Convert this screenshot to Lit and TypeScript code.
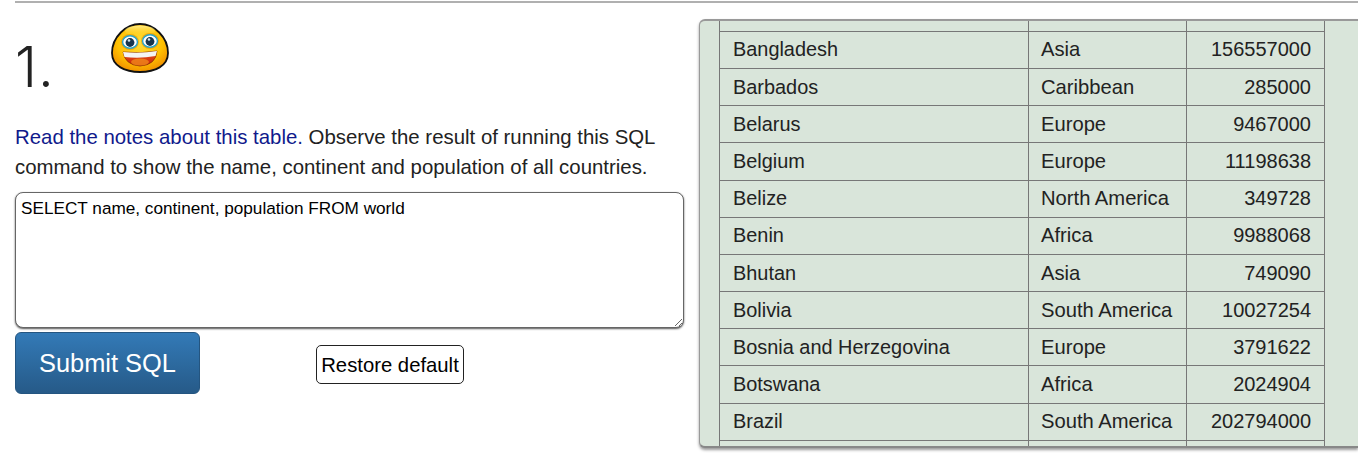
import { LitElement, html, css, svg } from "lit";
import { customElement } from "lit/decorators.js";

const rows: [string, string, string][] = [
  ["Bahrain", "Asia", "1234571"],
  ["Bangladesh", "Asia", "156557000"],
  ["Barbados", "Caribbean", "285000"],
  ["Belarus", "Europe", "9467000"],
  ["Belgium", "Europe", "11198638"],
  ["Belize", "North America", "349728"],
  ["Benin", "Africa", "9988068"],
  ["Bhutan", "Asia", "749090"],
  ["Bolivia", "South America", "10027254"],
  ["Bosnia and Herzegovina", "Europe", "3791622"],
  ["Botswana", "Africa", "2024904"],
  ["Brazil", "South America", "202794000"],
  ["Brunei", "Asia", "393372"],
];

const smiley = svg`<svg class="smiley" width="60" height="52" viewBox="0 0 60 52">
  <defs>
    <radialGradient id="face" cx="50%" cy="38%" r="68%">
      <stop offset="0" stop-color="#ffdf3c"/><stop offset="0.6" stop-color="#ffc000"/><stop offset="1" stop-color="#ee8400"/>
    </radialGradient>
    <linearGradient id="mouth" x1="0" y1="0" x2="0" y2="1">
      <stop offset="0" stop-color="#e8591a"/><stop offset="1" stop-color="#c81e0c"/>
    </linearGradient>
    <linearGradient id="shine" x1="0" y1="0" x2="0" y2="1">
      <stop offset="0" stop-color="#fff3a0" stop-opacity=".85"/><stop offset="1" stop-color="#ffd21e" stop-opacity="0"/>
    </linearGradient>
  </defs>
  <path d="M30 2C44 2 58 15 58 31C58 44 45 50 30 50C15 50 2 44 2 31C2 15 16 2 30 2Z" fill="url(#face)" stroke="#111" stroke-width="1.8"/>
  <ellipse cx="30" cy="9" rx="15" ry="5.5" fill="url(#shine)"/>
  <ellipse cx="20" cy="20" rx="9" ry="8" fill="#d98a00" opacity=".55"/>
  <ellipse cx="40" cy="19" rx="9" ry="8" fill="#d98a00" opacity=".55"/>
  <ellipse cx="20" cy="20" rx="7.4" ry="6.2" fill="#fff" stroke="#2aa3c9" stroke-width="1.4"/>
  <ellipse cx="40" cy="19" rx="7.4" ry="6.2" fill="#fff" stroke="#2aa3c9" stroke-width="1.4"/>
  <circle cx="20" cy="20.5" r="4.4" fill="#17344d"/>
  <circle cx="40" cy="19.5" r="4.4" fill="#17344d"/>
  <circle cx="19" cy="18.5" r="1.3" fill="#cfe6f2"/>
  <circle cx="39" cy="17.5" r="1.3" fill="#cfe6f2"/>
  <path d="M13 30Q30 32 47 29Q46 43 30 44Q15 43 13 30Z" fill="url(#mouth)" stroke="#8a3a00" stroke-width=".8"/>
  <path d="M13 30Q30 32 47 29L45.5 34Q30 37 14.5 35Z" fill="#f4f4f4"/>
  <ellipse cx="30" cy="40" rx="9" ry="3.5" fill="#f08a1a" opacity=".8"/>
</svg>`;

@customElement("app-root")
export class AppRoot extends LitElement {
  static styles = css`
    :host {
      display: block;
      width: 1358px;
      height: 467px;
      overflow: hidden;
      background: #fff;
      box-sizing: border-box;
      padding-left: 15px;
      font-family: "Liberation Sans", Arial, sans-serif;
      color: #222;
    }
    .rule {
      height: 2px;
      margin-top: 1px;
      background: #b0b0b0;
    }
    .main {
      display: flex;
      align-items: flex-start;
      gap: 15px;
      margin-top: 16px;
    }
    .left {
      width: 669px;
      flex: none;
    }
    .head {
      display: flex;
      align-items: flex-start;
      height: 82px;
    }
    .num {
      font-family: Inter, "Liberation Sans", sans-serif;
      font-weight: 300;
      font-size: 56px;
      line-height: 66px;
      letter-spacing: 1px;
      width: 95px;
      margin-top: 15px;
      color: #222;
    }
    .smiley {
      display: block;
      margin-top: 3px;
    }
    .intro {
      margin: 21px 0 10px;
      font-size: 20.4px;
      line-height: 30px;
      color: #222;
    }
    .intro a {
      color: #101a8c;
      text-decoration: none;
    }
    textarea {
      display: block;
      box-sizing: border-box;
      width: 669px;
      height: 136px;
      margin: 0;
      padding: 5px;
      border: 1px solid #666;
      border-radius: 8px;
      box-shadow: 0 1px 2px #555;
      font-family: "Liberation Sans", Arial, sans-serif;
      font-size: 17.2px;
      line-height: 20px;
      color: #000;
      background: #fff;
      outline: none;
    }
    .actions {
      display: flex;
      align-items: center;
      margin-top: 4px;
    }
    .submit {
      box-sizing: border-box;
      width: 185px;
      height: 62px;
      border: 1px solid #245580;
      border-radius: 6px;
      background: linear-gradient(#337ab7, #265a88);
      color: #fff;
      font-family: "Liberation Sans", Arial, sans-serif;
      font-size: 25.4px;
      padding: 0;
    }
    .restore {
      box-sizing: border-box;
      width: 148px;
      height: 39px;
      margin-left: 116px;
      margin-top: 2px;
      border: 1px solid #222;
      border-radius: 5px;
      background: #fff;
      color: #000;
      font-family: "Liberation Sans", Arial, sans-serif;
      font-size: 20.3px;
      padding: 2px 0 0;
    }
    .pane {
      flex: 1;
      box-sizing: border-box;
      height: 429px;
      overflow: hidden;
      background: #d9e5da;
      border-top: 2px solid #999;
      border-left: 1px solid #999;
      border-bottom: 2px solid #888;
      border-radius: 6px 0 0 6px;
      box-shadow: 0 2px 3px #999;
      padding-left: 19px;
    }
    table {
      border-collapse: collapse;
      width: 605px;
      table-layout: fixed;
      margin-top: -27.4px;
      font-size: 19.9px;
      color: #222;
    }
    td {
      box-sizing: border-box;
      height: 37.2px;
      padding: 0 13px;
      border: 1px solid #777;
      white-space: nowrap;
      overflow: hidden;
    }
    td.m {
      padding-left: 12px;
      font-size: 20.2px;
    }
    td.n {
      text-align: right;
      font-size: 20px;
    }
    col.a { width: 309px; }
    col.b { width: 158px; }
    col.c { width: 138px; }
  `;

  render() {
    return html`
      <div class="rule"></div>
      <div class="main">
        <div class="left">
          <div class="head"><div class="num">1.</div>${smiley}</div>
          <p class="intro"><a href="#">Read the notes about this table.</a> Observe the result of running this SQL command to show the name, continent and population of all countries.</p>
          <textarea spellcheck="false">SELECT name, continent, population FROM world</textarea>
          <div class="actions">
            <button class="submit">Submit SQL</button>
            <button class="restore">Restore default</button>
          </div>
        </div>
        <div class="pane">
          <table>
            <colgroup><col class="a" /><col class="b" /><col class="c" /></colgroup>
            <tbody>
              ${rows.map((r) => html`<tr><td>${r[0]}</td><td class="m">${r[1]}</td><td class="n">${r[2]}</td></tr>`)}
            </tbody>
          </table>
        </div>
      </div>
    `;
  }
}
